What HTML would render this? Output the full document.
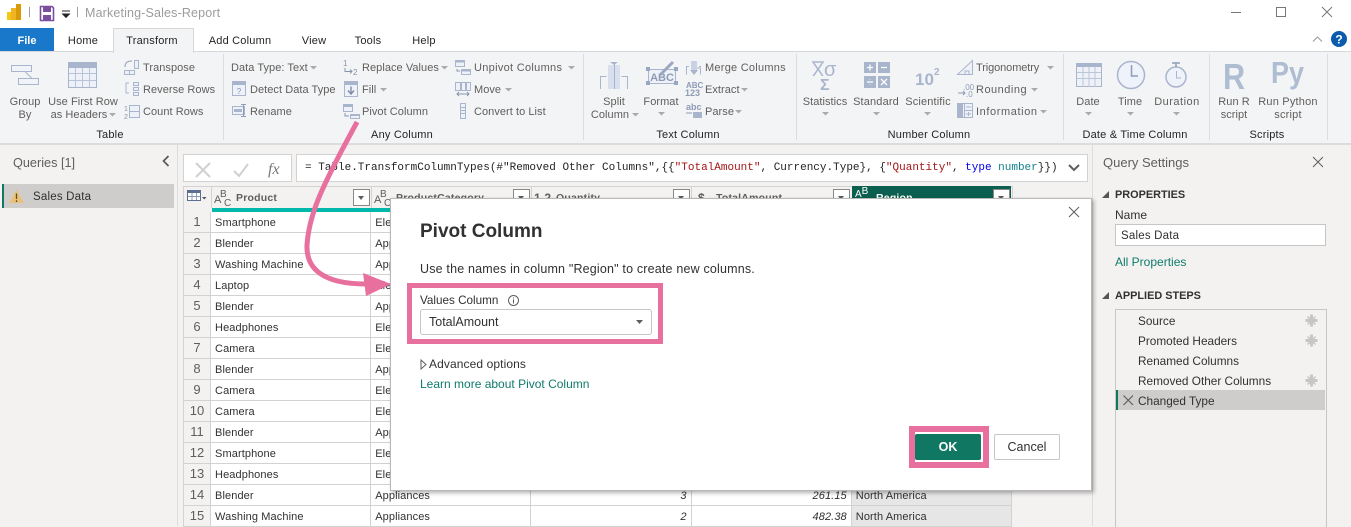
<!DOCTYPE html>
<html><head><meta charset="utf-8"><style>
html,body{margin:0;padding:0}
body{width:1351px;height:526px;overflow:hidden;position:relative;background:#f3f2f1;font-family:"Liberation Sans",sans-serif;font-size:12px;color:#252423}
.t{position:absolute;white-space:nowrap;line-height:14px}
.r{color:#605e5c;font-size:11px;letter-spacing:.05px}
.c{transform:translateX(-50%);text-align:center}
.g{color:#252423;font-size:11px;letter-spacing:.2px}
.b{position:absolute}
.tab{font-size:11px;color:#252423;letter-spacing:.2px}
table{position:absolute;left:183px;top:212px;border-collapse:separate;border-spacing:0;table-layout:fixed;width:829px;background:#fff}
td{height:18px;padding:2px 0 0 4px;border-right:1px solid #d2d2d2;border-bottom:1px solid #d2d2d2;box-sizing:content-box;line-height:18px;white-space:nowrap;overflow:hidden;font-size:11px;letter-spacing:.1px;color:#323130}
td.n{background:#f3f2f1;text-align:center;padding:0;height:20px;line-height:20px;color:#605e5c;font-size:13px;border-left:1px solid #d2d2d2;letter-spacing:0}
td.q{text-align:right;padding:2px 4px 0 0;font-style:italic}
td.m{background:#e6e6e6}
.fb{position:absolute;width:15px;height:15px;background:#fff;border:1px solid #8a8886;top:189px}
.fb:after{content:"";position:absolute;left:4px;top:6px;border:3.5px solid transparent;border-top:4px solid #605e5c}
.h{color:#605e5c;font-weight:bold;font-size:10.5px;letter-spacing:.2px;top:191px}
.s{font-size:11.8px;color:#323130}
.f{font-family:"Liberation Mono",monospace;font-size:11px;color:#252423}
</style></head><body>
<!-- top white area -->
<div class="b" style="left:0;top:0;width:1351px;height:52px;background:#fff"></div>
<div class="t" style="left:85px;top:6px;font-size:12.5px;color:#9c9c9c;letter-spacing:.15px">Marketing-Sales-Report</div>
<div class="b" style="left:0;top:28px;width:54px;height:23px;background:#1a78cb"></div>
<div class="t c" style="left:27px;top:34px;color:#fff;font-size:11px;font-weight:bold">File</div>
<div class="b" style="left:0;top:51px;width:1351px;height:1px;background:#d8d8d8"></div>
<div class="b" style="left:0;top:52px;width:1351px;height:91px;background:#f3f4f6"></div>
<div class="b" style="left:0;top:143px;width:1351px;height:2px;background:#dcdcdc"></div>
<div class="b" style="left:113px;top:28px;width:79px;height:24px;background:#f3f4f6;border:1px solid #d8d8d8;border-bottom:none"></div>
<div class="t c tab" style="left:83px;top:34px">Home</div>
<div class="t c tab" style="left:152px;top:34px">Transform</div>
<div class="t c tab" style="left:240px;top:34px">Add Column</div>
<div class="t c tab" style="left:314px;top:34px">View</div>
<div class="t c tab" style="left:368px;top:34px">Tools</div>
<div class="t c tab" style="left:424px;top:34px">Help</div>

<!-- ribbon icons -->
<svg class="b" style="left:0;top:0" width="1351" height="145" viewBox="0 0 1351 145" fill="none">
<!-- logo -->
<rect x="7" y="12" width="5" height="8" fill="#f2c811"/><rect x="11" y="8" width="5" height="12" fill="#f0b323"/><rect x="16" y="4" width="5" height="16" fill="#d99a0a"/>
<path d="M29.500 7V17M77.500 7V17" stroke="#a0a0a0"/>
<!-- save -->
<path d="M40.500 6.500H52L53.500 8V20.500H40.500Z" stroke="#7a4fa0" stroke-width="1.600"/><rect x="43" y="7" width="8" height="5" fill="#7a4fa0"/><rect x="43" y="15" width="8" height="5" fill="#7a4fa0"/>
<path d="M62 11H70M62.500 14H69.500L66 17.500Z" stroke="#252423" fill="#252423" stroke-width=".9"/>
<!-- window controls -->
<path d="M1231 12.500H1241" stroke="#777"/><rect x="1276.500" y="7.500" width="9" height="9" stroke="#777"/><path d="M1322 7L1332 17M1332 7L1322 17" stroke="#777"/>
<path d="M1313 41.500L1317.500 37L1322 41.500" stroke="#999"/>
<circle cx="1339" cy="39" r="8" fill="#0b5cad"/>
<text x="1339" y="43.500" fill="#fff" font-family="Liberation Sans" font-size="12" font-weight="bold" text-anchor="middle">?</text>
<!-- separators -->
<path d="M223.500 54V140M583.500 54V140M796.500 54V140M1063.500 54V140M1209.500 54V140M1327.500 54V140" stroke="#dcdde0"/>
<!-- group by -->
<g stroke="#a9b5cc" fill="#f0f3f8"><rect x="11.500" y="65.500" width="20" height="6"/><rect x="18.500" y="78.500" width="20" height="6"/><path d="M25 71.500L32 78.500"/></g>
<!-- first row -->
<rect x="68.500" y="62.500" width="28" height="25" fill="#eef1f7" stroke="#a9b5cc"/><rect x="68" y="62" width="29" height="6" fill="#a9b5cc"/>
<path d="M75.500 68V87M82.500 68V87M89.500 68V87M69 73.500H96M69 80.500H96" stroke="#b9c4d8"/>
<!-- transpose -->
<g stroke="#a9b5cc" fill="#eef1f7"><rect x="124.500" y="70.500" width="5" height="4"/><rect x="129.500" y="70.500" width="5" height="4"/><rect x="134.500" y="60.500" width="4" height="8"/></g><path d="M125 67C125 62 128 61 132 61" stroke="#8e9bb5"/>
<!-- reverse -->
<path d="M129 83H126V93H129M136 83V84" stroke="#a9b5cc"/><g stroke="#a9b5cc" fill="#eef1f7"><rect x="133.500" y="82.500" width="5" height="3"/><rect x="133.500" y="87.500" width="5" height="3"/><rect x="133.500" y="92.500" width="5" height="3"/></g>
<!-- count -->
<rect x="129.500" y="105.500" width="10" height="12" fill="#eef1f7" stroke="#a9b5cc"/><path d="M130 111.500H139" stroke="#a9b5cc"/>
<text x="124" y="111" font-size="7" fill="#8793ad" font-family="Liberation Sans">1</text><text x="124" y="119" font-size="7" fill="#8793ad" font-family="Liberation Sans">2</text>
<!-- detect -->
<rect x="232.500" y="81.500" width="13" height="14" fill="#eef1f7" stroke="#a9b5cc"/><rect x="232" y="81" width="14" height="4" fill="#a9b5cc"/><text x="239" y="94" font-size="8" fill="#8793ad" text-anchor="middle" font-family="Liberation Sans">?</text>
<!-- rename -->
<rect x="232.500" y="106.500" width="12" height="8" fill="#eef1f7" stroke="#a9b5cc"/><rect x="234" y="109" width="8" height="3" fill="#a9b5cc"/><path d="M241 104.500H246M241 116.500H246M243.500 105V116" stroke="#8e9bb5"/>
<!-- replace -->
<text x="343" y="66" font-size="8" fill="#8793ad" font-family="Liberation Sans">1</text><text x="353" y="75" font-size="8" fill="#8793ad" font-family="Liberation Sans">2</text><path d="M345 68V71.500H352M350 69.500L352 71.500L350 73.500" stroke="#8793ad"/>
<!-- fill -->
<rect x="344.500" y="81.500" width="13" height="15" fill="#eef1f7" stroke="#a9b5cc"/><rect x="344" y="81" width="14" height="4" fill="#a9b5cc"/><path d="M351 86.500V93M348 90.500L351 94L354 90.500" stroke="#7f8ca8" stroke-width="1.400"/>
<!-- pivot -->
<g stroke="#a9b5cc" fill="#eef1f7"><rect x="343.500" y="104.500" width="9" height="7"/><rect x="350.500" y="114.500" width="9" height="4"/></g><rect x="343" y="104" width="10" height="3" fill="#a9b5cc"/><rect x="350" y="114" width="10" height="2" fill="#a9b5cc"/><path d="M345 113V116H349" stroke="#8793ad"/>
<!-- unpivot -->
<g stroke="#a9b5cc" fill="#eef1f7"><rect x="455.500" y="60.500" width="9" height="6"/><rect x="461.500" y="69.500" width="9" height="5"/></g><rect x="455" y="60" width="10" height="2.500" fill="#a9b5cc"/><rect x="461" y="69" width="10" height="2.500" fill="#a9b5cc"/><path d="M457 69V71H460" stroke="#8793ad"/>
<!-- move -->
<g stroke="#a9b5cc" fill="#eef1f7"><rect x="455.500" y="82.500" width="5" height="8"/><rect x="461.500" y="82.500" width="4" height="8"/><rect x="466.500" y="82.500" width="4" height="8"/></g><path d="M457 94H469M459 92L457 94L459 96M467 92L469 94L467 96" stroke="#8793ad"/>
<!-- convert -->
<rect x="460.500" y="103.500" width="5" height="15" fill="#eef1f7" stroke="#a9b5cc"/><path d="M461 107.500H465M461 110.500H465M461 113.500H465" stroke="#a9b5cc"/>
<!-- split -->
<path d="M600.500 89V76.500H606.500M621.500 76.500H627.500V89" stroke="#a9b5cc"/><rect x="608" y="65" width="12" height="24" fill="#d8e0ee"/><path d="M613.500 64H614.500V89" stroke="#a9b5cc"/><path d="M610 62H618L614 65Z" fill="#a9b5cc"/>
<!-- format -->
<rect x="648.500" y="69.500" width="27" height="14" fill="#eef1f7" stroke="#a9b5cc"/><text x="662" y="81" font-size="11" fill="#8e9bb5" text-anchor="middle" font-family="Liberation Sans" font-weight="bold">ABC</text><path d="M660 75L673 62" stroke="#9aa7c0" stroke-width="3"/>
<g fill="#9aa7c0"><rect x="646" y="67" width="4" height="4"/><rect x="674" y="67" width="4" height="4"/><rect x="646" y="81" width="4" height="4"/><rect x="674" y="81" width="4" height="4"/></g>
<!-- merge -->
<path d="M686.500 74.500V66.500H689M701 66.500H699" stroke="#a9b5cc"/><path d="M696 68H700.500V74.500" stroke="#a9b5cc"/><rect x="691" y="61" width="6" height="10" fill="#c8d2e4"/><path d="M690 70H698L694 75Z" fill="#a9b5cc"/>
<!-- extract -->
<text x="686" y="88" font-size="8" fill="#8e9bb5" font-weight="bold" font-family="Liberation Sans">ABC</text><text x="685" y="96" font-size="9" fill="#8e9bb5" font-weight="bold" font-family="Liberation Sans">123</text>
<!-- parse -->
<text x="686" y="110" font-size="9" fill="#8e9bb5" font-weight="bold" font-family="Liberation Sans">abc</text><rect x="693" y="112" width="9" height="6" fill="#a9b5cc"/><path d="M686 113H692" stroke="#8e9bb5"/>
<!-- statistics -->
<path d="M812 62H824" stroke="#a9b5cc" stroke-width="1.500"/><text x="812" y="76" font-size="18" fill="#a9b5cc" font-family="Liberation Sans">X</text><text x="824" y="76" font-size="20" fill="#a9b5cc" font-family="Liberation Sans">σ</text><text x="820" y="90" font-size="16" fill="#a9b5cc" font-family="Liberation Sans" font-weight="bold">Σ</text>
<!-- standard -->
<g fill="#a9b5cc"><rect x="864" y="62" width="12" height="11"/><rect x="878" y="62" width="12" height="11"/><rect x="864" y="76" width="12" height="12"/><rect x="878" y="76" width="12" height="12"/></g><path d="M867 67.500H873M870 64.500V70.500M881 67.500H887M867 82H873M881 79L887 85M887 79L881 85" stroke="#fff" stroke-width="1.300"/><path d="M870 79V79.500M870 84V84.500" stroke="#fff"/>
<!-- scientific -->
<text x="915" y="85" font-size="17" fill="#a9b5cc" font-weight="bold" font-family="Liberation Sans">10</text><text x="934" y="75" font-size="10" fill="#a9b5cc" font-weight="bold" font-family="Liberation Sans">2</text>
<!-- trig -->
<path d="M957.500 74.500L972.500 60.500V74.500Z" fill="#eef1f7" stroke="#a9b5cc"/><path d="M965 74V71H969V74" stroke="#a9b5cc"/>
<!-- rounding -->
<text x="963" y="90" font-size="8" fill="#8e9bb5" font-family="Liberation Sans">.00</text><text x="966" y="97" font-size="8" fill="#8e9bb5" font-family="Liberation Sans">.0</text><path d="M958 93H965M963 91L965 93L963 95" stroke="#8e9bb5"/>
<!-- information -->
<rect x="957.500" y="103.500" width="15" height="14" fill="#eef1f7" stroke="#a9b5cc"/><rect x="958" y="104" width="5" height="13" fill="#a9b5cc"/><path d="M965 110.500H972.500M964.500 104V117M966 107H971M966 114H971M968.500 112V116" stroke="#a9b5cc"/>
<!-- date -->
<rect x="1076.500" y="63.500" width="25" height="23" fill="#eef1f7" stroke="#a9b5cc"/><rect x="1076" y="63" width="26" height="4" fill="#a9b5cc"/><path d="M1083 67V87M1089 67V87M1095 67V87M1077 72.500H1101M1077 78.500H1101" stroke="#bcc7da"/>
<!-- time -->
<circle cx="1131" cy="75" r="13.500" fill="#eef3fb" stroke="#a9b5cc" stroke-width="1.500"/><path d="M1131.500 65V76H1138" stroke="#8e9bb5" stroke-width="1.500"/>
<!-- duration -->
<circle cx="1176" cy="77" r="10" fill="#eef3fb" stroke="#a9b5cc" stroke-width="1.500"/><path d="M1172 63H1180M1176 63V67" stroke="#8e9bb5" stroke-width="1.500"/><path d="M1176.500 71V78H1181" stroke="#a9b5cc"/>
<!-- R, Py -->
<text transform="translate(1223,89) scale(.85,1)" font-size="36" fill="#afbdd3" font-weight="bold" font-family="Liberation Sans">R</text>
<text transform="translate(1271,83) scale(.87,1)" font-size="31" fill="#afbdd3" font-weight="bold" font-family="Liberation Sans">Py</text>
<!-- carets -->
<g fill="#aaa"><path d="M310 66h7l-3.500 3.500z"/><path d="M441 66h7l-3.500 3.500z"/><path d="M380 88h7l-3.500 3.500z"/><path d="M109 113h7l-3.500 3.500z"/><path d="M568 66h7l-3.500 3.500z"/><path d="M505 88h7l-3.500 3.500z"/><path d="M632 113h7l-3.500 3.500z"/><path d="M658 112h7l-3.500 3.500z"/><path d="M741 88h7l-3.500 3.500z"/><path d="M735 110h7l-3.500 3.500z"/><path d="M822 112h7l-3.500 3.500z"/><path d="M873 112h7l-3.500 3.500z"/><path d="M924 112h7l-3.500 3.500z"/><path d="M1047 66h7l-3.500 3.500z"/><path d="M1031 88h7l-3.500 3.500z"/><path d="M1040 110h7l-3.500 3.500z"/><path d="M1085 112h7l-3.500 3.500z"/><path d="M1127 112h7l-3.500 3.500z"/><path d="M1173 112h7l-3.500 3.500z"/></g>
</svg>

<!-- ribbon text -->
<div class="t r c" style="left:25px;top:96px;line-height:13px">Group<br>By</div>
<div class="t r c" style="left:83px;top:96px;line-height:13px">Use First Row<br><span style="margin-right:8px">as Headers</span></div>
<div class="t r" style="left:143px;top:61px">Transpose</div>
<div class="t r" style="left:143px;top:83px">Reverse Rows</div>
<div class="t r" style="left:143px;top:105px">Count Rows</div>
<div class="t r" style="left:231px;top:61px">Data Type: Text</div>
<div class="t r" style="left:250px;top:83px">Detect Data Type</div>
<div class="t r" style="left:250px;top:105px">Rename</div>
<div class="t r" style="left:362px;top:61px">Replace Values</div>
<div class="t r" style="left:362px;top:83px">Fill</div>
<div class="t r" style="left:362px;top:105px">Pivot Column</div>
<div class="t r" style="left:474px;top:61px;letter-spacing:.3px">Unpivot Columns</div>
<div class="t r" style="left:474px;top:83px">Move</div>
<div class="t r" style="left:474px;top:105px">Convert to List</div>
<div class="t r c" style="left:614px;top:96px;line-height:13px">Split<br><span style="margin-right:8px">Column</span></div>
<div class="t r c" style="left:661px;top:95px">Format</div>
<div class="t r" style="left:705px;top:61px;letter-spacing:.25px">Merge Columns</div>
<div class="t r" style="left:705px;top:83px">Extract</div>
<div class="t r" style="left:705px;top:105px">Parse</div>
<div class="t r c" style="left:825px;top:95px">Statistics</div>
<div class="t r c" style="left:876px;top:95px;letter-spacing:.15px">Standard</div>
<div class="t r c" style="left:928px;top:95px;letter-spacing:.15px">Scientific</div>
<div class="t r" style="left:976px;top:61px;letter-spacing:-.1px">Trigonometry</div>
<div class="t r" style="left:976px;top:83px;letter-spacing:.5px">Rounding</div>
<div class="t r" style="left:976px;top:105px;letter-spacing:.6px">Information</div>
<div class="t r c" style="left:1088px;top:95px">Date</div>
<div class="t r c" style="left:1130px;top:95px">Time</div>
<div class="t r c" style="left:1177px;top:95px;letter-spacing:.5px">Duration</div>
<div class="t r c" style="left:1234px;top:96px;line-height:13px">Run R<br>script</div>
<div class="t r c" style="left:1288px;top:96px;line-height:13px;letter-spacing:.2px">Run Python<br>script</div>
<div class="t g c" style="left:110px;top:128px">Table</div>
<div class="t g c" style="left:402px;top:128px">Any Column</div>
<div class="t g c" style="left:688px;top:128px">Text Column</div>
<div class="t g c" style="left:929px;top:128px">Number Column</div>
<div class="t g c" style="left:1135px;top:128px">Date &amp; Time Column</div>
<div class="t g c" style="left:1267px;top:128px">Scripts</div>

<!-- panel separators -->
<div class="b" style="left:177px;top:145px;width:1px;height:381px;background:#dcdcdc"></div>
<div class="b" style="left:1092px;top:145px;width:1px;height:381px;background:#dcdcdc"></div>

<!-- queries -->
<div class="t" style="left:13px;top:156px;font-size:12.7px;color:#605e5c">Queries [1]</div>
<svg class="b" style="left:160px;top:154px" width="12" height="14"><path d="M8.500 2L3.500 7L8.500 12" stroke="#555" stroke-width="1.600" fill="none"/></svg>
<div class="b" style="left:2px;top:184px;width:172px;height:24px;background:#cfcdcb"></div>
<div class="b" style="left:2px;top:184px;width:2px;height:24px;background:#107762"></div>
<svg class="b" style="left:8px;top:188px" width="18" height="16"><path d="M8.500 1.500L16 15H1Z" fill="#e8c27a"/><path d="M8.500 5.500V11M8.500 12.300V14" stroke="#5a4a20" stroke-width="1.300"/></svg>
<div class="t" style="left:33px;top:190px;color:#323130;letter-spacing:.2px;font-size:11.5px">Sales Data</div>

<!-- formula bar -->
<div class="b" style="left:183px;top:154px;width:107px;height:26px;background:#fff;border:1px solid #d2d2d2"></div>
<svg class="b" style="left:183px;top:154px" width="108" height="28"><path d="M13 9L27 23M27 9L13 23" stroke="#d0d0d0" stroke-width="2" fill="none"/><path d="M51 17L56 22L65 10" stroke="#d0d0d0" stroke-width="2" fill="none"/><text x="85" y="20" font-family="Liberation Serif" font-style="italic" font-size="16" fill="#777">fx</text></svg>
<div class="b" style="left:296px;top:154px;width:790px;height:26px;background:#fff;border:1px solid #d2d2d2"></div>
<div class="t f" style="left:305px;top:161px">= Table.TransformColumnTypes(#"Removed Other Columns",{{<span style="color:#a31515">"TotalAmount"</span>, Currency.Type}, {<span style="color:#a31515">"Quantity"</span>, <span style="color:#0000e6">type</span> <span style="color:#12808a">number</span>}})</div>
<svg class="b" style="left:1067px;top:162px" width="14" height="12"><path d="M2 3L7 8L12 3" stroke="#605e5c" stroke-width="2" fill="none"/></svg>

<!-- table header -->
<div class="b" style="left:183px;top:186px;width:828px;height:22px;background:#f3f2f1;border:1px solid #d2d2d2;border-bottom:none"></div>
<div class="b" style="left:211px;top:186px;width:1px;height:22px;background:#d2d2d2"></div>
<div class="b" style="left:371px;top:186px;width:1px;height:22px;background:#d2d2d2"></div>
<div class="b" style="left:531px;top:186px;width:1px;height:22px;background:#d2d2d2"></div>
<div class="b" style="left:691px;top:186px;width:1px;height:22px;background:#d2d2d2"></div>
<div class="b" style="left:852px;top:186px;width:159px;height:22px;background:#0b5f50"></div>
<svg class="b" style="left:187px;top:190px" width="20" height="14"><rect x=".5" y=".5" width="13" height="10" fill="#fff" stroke="#5b6f94"/><rect x="0" y="0" width="14" height="3" fill="#5b6f94"/><path d="M5 3V10M9.500 3V10M1 6.500H13" stroke="#8e9bb5"/><path d="M15 7h4.500l-2.250 2.500z" fill="#555"/></svg>
<div class="t" style="left:214px;top:193px;font-size:11px;color:#605e5c">A</div>
<div class="t" style="left:220px;top:188px;font-size:10px;color:#605e5c">B</div>
<div class="t" style="left:224px;top:197px;font-size:10px;color:#605e5c">C</div>
<div class="t h" style="left:236px">Product</div>
<div class="fb" style="left:353px"></div>
<div class="b" style="left:212px;top:208px;width:800px;height:4px;background:#01b8aa"></div>
<div class="b" style="left:183px;top:208px;width:28px;height:4px;background:#f3f2f1;border-left:1px solid #d2d2d2"></div>
<div class="t" style="left:374px;top:193px;font-size:11px;color:#605e5c">A</div>
<div class="t" style="left:380px;top:188px;font-size:10px;color:#605e5c">B</div>
<div class="t" style="left:384px;top:197px;font-size:10px;color:#605e5c">C</div>
<div class="t h" style="left:396px">ProductCategory</div><div class="fb" style="left:513px"></div>
<div class="t h" style="left:534px;font-size:12px">1.2</div><div class="t h" style="left:556px">Quantity</div><div class="fb" style="left:673px"></div>
<div class="t h" style="left:698px;font-size:12px">$</div><div class="t h" style="left:716px">TotalAmount</div><div class="fb" style="left:833px"></div>
<div class="t" style="left:855px;top:188px;font-size:10px;color:#fff">A<span style="position:relative;top:-3px">B</span></div>
<div class="t h" style="left:876px;color:#fff">Region</div><div class="fb" style="left:993px"></div>

<!-- table -->
<table><colgroup><col style="width:28px"><col style="width:160px"><col style="width:160px"><col style="width:160px"><col style="width:160px"><col style="width:160px"></colgroup>
<tr><td class="n">1</td><td>Smartphone</td><td>Electronics</td><td></td><td></td><td class="m"></td></tr>
<tr><td class="n">2</td><td>Blender</td><td>Appliances</td><td></td><td></td><td class="m"></td></tr>
<tr><td class="n">3</td><td>Washing Machine</td><td>Appliances</td><td></td><td></td><td class="m"></td></tr>
<tr><td class="n">4</td><td>Laptop</td><td>Electronics</td><td></td><td></td><td class="m"></td></tr>
<tr><td class="n">5</td><td>Blender</td><td>Appliances</td><td></td><td></td><td class="m"></td></tr>
<tr><td class="n">6</td><td>Headphones</td><td>Electronics</td><td></td><td></td><td class="m"></td></tr>
<tr><td class="n">7</td><td>Camera</td><td>Electronics</td><td></td><td></td><td class="m"></td></tr>
<tr><td class="n">8</td><td>Blender</td><td>Appliances</td><td></td><td></td><td class="m"></td></tr>
<tr><td class="n">9</td><td>Camera</td><td>Electronics</td><td></td><td></td><td class="m"></td></tr>
<tr><td class="n">10</td><td>Camera</td><td>Electronics</td><td></td><td></td><td class="m"></td></tr>
<tr><td class="n">11</td><td>Blender</td><td>Appliances</td><td></td><td></td><td class="m"></td></tr>
<tr><td class="n">12</td><td>Smartphone</td><td>Electronics</td><td></td><td></td><td class="m"></td></tr>
<tr><td class="n">13</td><td>Headphones</td><td>Electronics</td><td></td><td></td><td class="m"></td></tr>
<tr><td class="n">14</td><td>Blender</td><td>Appliances</td><td class="q">3</td><td class="q">261.15</td><td class="m">North America</td></tr>
<tr><td class="n">15</td><td>Washing Machine</td><td>Appliances</td><td class="q">2</td><td class="q">482.38</td><td class="m">North America</td></tr>
</table>

<!-- query settings -->
<div class="t" style="left:1103px;top:156px;font-size:13px;color:#605e5c">Query Settings</div>
<svg class="b" style="left:1312px;top:156px" width="12" height="12"><path d="M1 1L11 11M11 1L1 11" stroke="#605e5c" fill="none"/></svg>
<svg class="b" style="left:1101px;top:190px" width="10" height="10"><path d="M1 8H8V1Z" fill="#555"/></svg>
<div class="t" style="left:1115px;top:188px;font-weight:bold;color:#323130;font-size:10.9px">PROPERTIES</div>
<div class="t" style="left:1115px;top:208px;color:#323130">Name</div>
<div class="b" style="left:1115px;top:224px;width:209px;height:20px;background:#fff;border:1px solid #c8c6c4"></div>
<div class="t" style="left:1121px;top:229px;color:#323130;font-size:11.5px;letter-spacing:.2px">Sales Data</div>
<div class="t" style="left:1115px;top:255px;color:#0f7b6c">All Properties</div>
<svg class="b" style="left:1101px;top:291px" width="10" height="10"><path d="M1 8H8V1Z" fill="#555"/></svg>
<div class="t" style="left:1115px;top:289px;font-weight:bold;color:#323130;font-size:10.9px">APPLIED STEPS</div>
<div class="b" style="left:1115px;top:309px;width:210px;height:217px;border:1px solid #c8c6c4;border-bottom:none"></div>
<div class="b" style="left:1116px;top:390px;width:209px;height:20px;background:#cfcdcb"></div>
<div class="b" style="left:1116px;top:390px;width:2px;height:20px;background:#107762"></div>
<div class="t s" style="left:1138px;top:314px">Source</div>
<div class="t s" style="left:1138px;top:334px">Promoted Headers</div>
<div class="t s" style="left:1138px;top:354px">Renamed Columns</div>
<div class="t s" style="left:1138px;top:374px">Removed Other Columns</div>
<div class="t s" style="left:1138px;top:394px">Changed Type</div>
<svg class="b" style="left:1122px;top:394px" width="13" height="13"><path d="M1.500 1.500L11 11M11 1.500L1.500 11" stroke="#605e5c" stroke-width="1.200" fill="none"/></svg>
<svg class="b" style="left:1305px;top:314px" width="13" height="74" fill="#c8c6c4"><g><circle cx="6.500" cy="6.500" r="3.500"/><path d="M5 .5h3v12h-3zM.5 5h12v3H.5z"/><path d="M2 3l1-1 8 8-1 1zM10 2l1 1-8 8-1-1z"/></g><g transform="translate(0,20)"><circle cx="6.500" cy="6.500" r="3.500"/><path d="M5 .5h3v12h-3zM.5 5h12v3H.5z"/><path d="M2 3l1-1 8 8-1 1zM10 2l1 1-8 8-1-1z"/></g><g transform="translate(0,60)"><circle cx="6.500" cy="6.500" r="3.500"/><path d="M5 .5h3v12h-3zM.5 5h12v3H.5z"/><path d="M2 3l1-1 8 8-1 1zM10 2l1 1-8 8-1-1z"/></g></svg>

<!-- dialog -->
<div class="b" style="left:390px;top:198px;width:700px;height:291px;background:#fff;border:1px solid #b8b8b8;box-shadow:2px 2px 4px rgba(0,0,0,.3)"></div>
<svg class="b" style="left:1068px;top:206px" width="12" height="12"><path d="M1 1L11 11M11 1L1 11" stroke="#605e5c" fill="none"/></svg>
<div class="t" style="left:420px;top:220px;font-size:19px;line-height:24px;font-weight:bold;color:#323130">Pivot Column</div>
<div class="t" style="left:420px;top:262px;font-size:12.5px;color:#323130;letter-spacing:.18px">Use the names in column "Region" to create new columns.</div>
<div class="b" style="left:407px;top:283px;width:246px;height:51px;border:5px solid #e8709e"></div>
<div class="t" style="left:420px;top:294px;color:#323130;font-size:11.7px">Values Column</div>
<svg class="b" style="left:507px;top:294px" width="13" height="13"><circle cx="6.500" cy="6.500" r="5" stroke="#605e5c" fill="none"/><path d="M6.500 5.500V9.500M6.500 3.500V4.500" stroke="#605e5c"/></svg>
<div class="b" style="left:420px;top:309px;width:230px;height:24px;background:#fff;border:1px solid #c8c6c4;border-radius:3px"></div>
<div class="t" style="left:429px;top:315px;color:#323130;font-size:12.5px">TotalAmount</div>
<svg class="b" style="left:636px;top:319px" width="8" height="6"><path d="M0 1h7L3.500 5z" fill="#605e5c"/></svg>
<svg class="b" style="left:420px;top:359px" width="7" height="11"><path d="M1 1L6 5.500L1 10Z" stroke="#605e5c" fill="none"/></svg>
<div class="t" style="left:429px;top:357px;color:#323130;letter-spacing:.1px">Advanced options</div>
<div class="t" style="left:420px;top:377px;color:#0f7b6c">Learn more about Pivot Column</div>
<div class="b" style="left:909px;top:426px;width:68px;height:30px;border:6px solid #e8709e"></div>
<div class="b" style="left:915px;top:434px;width:66px;height:26px;background:#107762;border-radius:2px;color:#fff;font-weight:bold;font-size:12.5px;text-align:center;line-height:26px">OK</div>
<div class="b" style="left:994px;top:434px;width:64px;height:24px;background:#fff;border:1px solid #c8c6c4;border-radius:2px;color:#323130;font-size:12.5px;text-align:center;line-height:24px">Cancel</div>

<!-- arrow -->
<svg class="b" style="left:0;top:0" width="1351" height="526" fill="none"><path d="M357 122L342 150C322 188 309 215 307 245C306 268 322 284 366 284" stroke="#e8709e" stroke-width="5"/><path d="M363 273L391 284L366 296Z" fill="#e8709e"/></svg>
</body></html>
